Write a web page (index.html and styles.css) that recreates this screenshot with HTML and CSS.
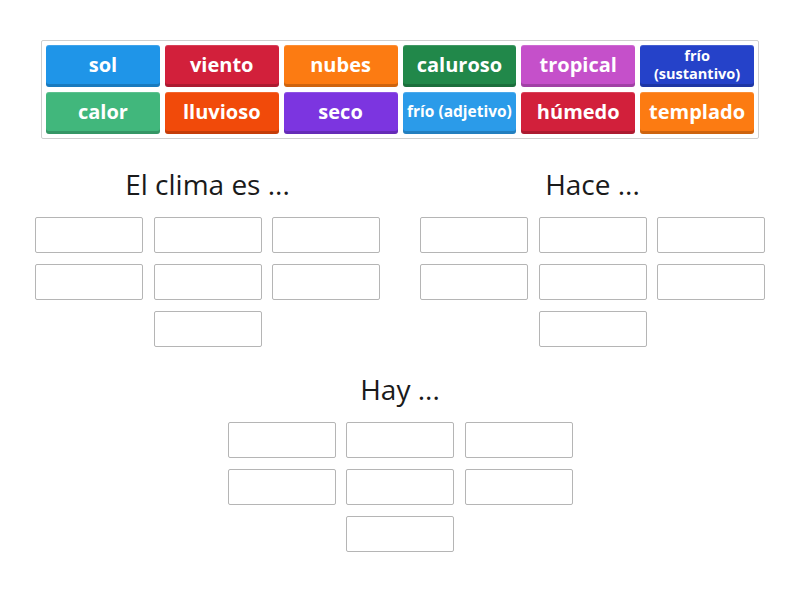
FILE: index.html
```html
<!DOCTYPE html>
<html lang="es">
<head>
<meta charset="utf-8">
<title>Clima</title>
<link rel="stylesheet" href="styles.css">
</head>
<body>
<div class="bank">
  <div class="tile c-blue">sol</div>
  <div class="tile c-red">viento</div>
  <div class="tile c-orange">nubes</div>
  <div class="tile c-dgreen">caluroso</div>
  <div class="tile c-magenta">tropical</div>
  <div class="tile c-navy small2">frío<br>(sustantivo)</div>
  <div class="tile c-green">calor</div>
  <div class="tile c-redorange">lluvioso</div>
  <div class="tile c-purple">seco</div>
  <div class="tile c-blue2 small">frío (adjetivo)</div>
  <div class="tile c-red">húmedo</div>
  <div class="tile c-orange">templado</div>
</div>

<div class="groups">
  <div class="group">
    <h2 class="title">El clima es ...</h2>
    <div class="slots">
      <div class="slot"></div><div class="slot"></div><div class="slot"></div>
      <div class="slot"></div><div class="slot"></div><div class="slot"></div>
      <div class="slot mid"></div>
    </div>
  </div>
  <div class="group">
    <h2 class="title">Hace ...</h2>
    <div class="slots">
      <div class="slot"></div><div class="slot"></div><div class="slot"></div>
      <div class="slot"></div><div class="slot"></div><div class="slot"></div>
      <div class="slot mid"></div>
    </div>
  </div>
</div>

<div class="groups lower">
  <div class="group">
    <h2 class="title">Hay ...</h2>
    <div class="slots">
      <div class="slot"></div><div class="slot"></div><div class="slot"></div>
      <div class="slot"></div><div class="slot"></div><div class="slot"></div>
      <div class="slot mid"></div>
    </div>
  </div>
</div>
</body>
</html>
```

FILE: styles.css
```css
* { box-sizing: border-box; }
html, body { margin: 0; padding: 0; background: #fff; }
body {
  width: 800px;
  height: 600px;
  overflow: hidden;
  font-family: "Open Sans", "Noto Sans", sans-serif;
}

.bank {
  width: 718px;
  margin: 40px 0 0 41px;
  padding: 4px;
  border: 1px solid #cfcfcf;
  border-radius: 2px;
  display: grid;
  grid-template-columns: repeat(6, 1fr);
  grid-auto-rows: 42px;
  gap: 5px 5px;
}

.tile {
  display: flex;
  align-items: center;
  justify-content: center;
  text-align: center;
  color: #fff;
  font-weight: 700;
  font-size: 20px;
  line-height: 1;
  border-radius: 3px;
  box-shadow: inset 0 -3px 0 rgba(0,0,0,0.18), inset 0 1px 0 rgba(255,255,255,0.15);
  padding-bottom: 2px;
}
.tile.small { font-size: 15.5px; }
.tile.small2 { font-size: 14.5px; line-height: 18px; }

.c-blue { background: #1f95e8; }
.c-blue2 { background: #2b9be9; }
.c-red { background: #d2203b; }
.c-orange { background: #fc7b12; }
.c-dgreen { background: #21884a; }
.c-magenta { background: #c550ca; }
.c-navy { background: #2542c9; }
.c-green { background: #41b77c; }
.c-redorange { background: #f14a0a; }
.c-purple { background: #7c35e0; }

.groups {
  display: flex;
  justify-content: center;
  gap: 40px;
  margin-top: 26px;
}
.groups.lower { margin-top: 23px; }

.group { width: 345px; }

.title {
  margin: 0 0 14px;
  font-weight: 400;
  font-size: 28px;
  line-height: 38px;
  color: #1a1a1a;
  text-align: center;
}

.slots {
  display: grid;
  grid-template-columns: repeat(3, 108px);
  grid-auto-rows: 36px;
  gap: 11px 10.5px;
}
.slot {
  border: 1px solid #b5b5b5;
  border-radius: 2px;
  background: #fff;
}
.slot.mid { grid-column: 2; }
```
